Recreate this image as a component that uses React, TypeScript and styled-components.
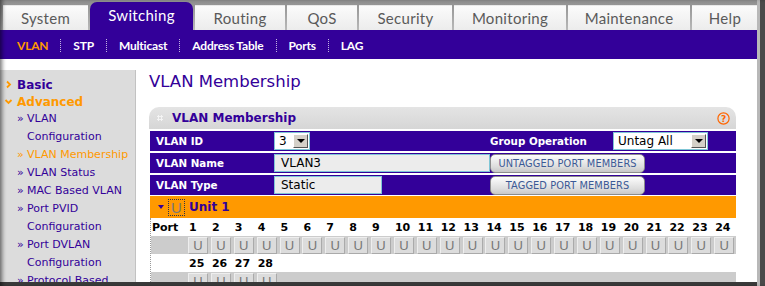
import styled, { createGlobalStyle, css } from "styled-components";

const GlobalStyle = createGlobalStyle`
  html, body {
    margin: 0;
    padding: 0;
    background: #fff;
  }
`;

const PURPLE = "#330099";
const ORANGE = "#ff9900";

const Frame = styled.div`
  position: relative;
  width: 765px;
  height: 286px;
  overflow: hidden;
  display: flex;
  flex-direction: column;
  background: #fff;
  font-family: "DejaVu Sans", Verdana, sans-serif;

  &::after {
    content: "";
    position: absolute;
    inset: 0;
    pointer-events: none;
    box-shadow:
      inset 4px 0 4px -2px rgba(0, 0, 0, 0.55),
      inset -5px 0 0 0 #4a4a4a,
      inset -8px 0 0 0 #b8b8b8,
      inset 0 -4px 0 0 #3a3a3a;
  }
`;

const TabBar = styled.div`
  height: 30px;
  display: flex;
  align-items: flex-end;
  gap: 2px;
  padding-left: 3px;
  background: linear-gradient(#8e8e8e, #b9b9b9);
  flex-shrink: 0;
`;

const Tab = styled.div<{ $w: number; $active?: boolean }>`
  width: ${(p) => p.$w}px;
  height: 25px;
  display: flex;
  align-items: center;
  justify-content: center;
  font-family: Lato, "Open Sans", sans-serif;
  font-size: 15px;
  letter-spacing: 0.3px;
  color: #5a5a5a;
  background: linear-gradient(#fbfbfb, #ececec);
  border-top: 1px solid #e8e8e8;
  box-sizing: border-box;

  ${(p) =>
    p.$active &&
    css`
      height: 28px;
      color: #fff;
      background: ${PURPLE};
      border-top: none;
      border-radius: 7px 7px 0 0;
      padding-bottom: 3px;
    `}
`;

const SubNav = styled.div`
  height: 29px;
  display: flex;
  align-items: center;
  padding-left: 17px;
  background: ${PURPLE};
  flex-shrink: 0;
`;

const SubItem = styled.span<{ $active?: boolean }>`
  font-family: Lato, "Open Sans", sans-serif;
  font-weight: 700;
  font-size: 12px;
  letter-spacing: -0.2px;
  color: ${(p) => (p.$active ? ORANGE : "#fff")};
`;

const SubSep = styled.span`
  display: inline-block;
  height: 13px;
  margin: 0 12px -2px;
  border-left: 1px dotted rgba(255, 255, 255, 0.7);
`;

const Body = styled.div`
  flex: 1;
  display: flex;
  min-height: 0;
`;

const Sidebar = styled.div`
  width: 136px;
  margin-top: 11px;
  padding-top: 6px;
  background: #dcdcdc;
  border-right: 1px solid #c2c2c2;
  box-sizing: border-box;
  flex-shrink: 0;
`;

const SideHead = styled.div<{ $open?: boolean }>`
  display: flex;
  align-items: center;
  height: 17px;
  padding-left: 4px;
  font-size: 12px;
  font-weight: 700;
  color: ${(p) => (p.$open ? ORANGE : PURPLE)};

  svg {
    width: 9px;
    margin-right: 4px;
  }
`;

const SideLink = styled.div<{ $active?: boolean }>`
  display: flex;
  padding: 0 0 0 17px;
  font-size: 11px;
  line-height: 18px;
  color: ${(p) => (p.$active ? ORANGE : PURPLE)};

  &::before {
    content: "»";
    width: 10px;
    flex-shrink: 0;
  }

  span {
    max-width: 105px;
  }
`;

const Main = styled.div`
  flex: 1;
  padding: 13px 29px 0 13px;
  min-width: 0;
`;

const Title = styled.div`
  font-size: 16.5px;
  line-height: 20px;
  color: ${PURPLE};
  margin-bottom: 15px;
`;

const Panel = styled.div`
  display: flex;
  flex-direction: column;
`;

const PanelHead = styled.div`
  height: 22px;
  display: flex;
  align-items: center;
  padding: 0 6px 0 8px;
  border-radius: 10px 10px 0 0;
  background: linear-gradient(#e4e4e4, #d6d6d6);
  font-size: 12px;
  font-weight: 700;
  color: ${PURPLE};
`;

const Grip = styled.span`
  width: 6px;
  height: 6px;
  margin-right: 9px;
  background-image: radial-gradient(circle, #f4f4f4 1px, transparent 1.2px);
  background-size: 3px 3px;
`;

const HelpIcon = styled.svg`
  margin-left: auto;
`;

const FormRow = styled.div`
  display: grid;
  grid-template-columns: 124px 216px 123px 1fr;
  align-items: center;
  height: 20px;
  margin: 2px 0 0 1px;
  background: ${PURPLE};
`;

const Label = styled.span<{ $flush?: boolean }>`
  padding-left: ${(p) => (p.$flush ? 0 : 6)}px;
  font-size: 10.3px;
  font-weight: 700;
  color: #fff;
`;

const SelectBox = styled.div<{ $w: number }>`
  width: ${(p) => p.$w}px;
  height: 18px;
  display: flex;
  align-items: center;
  justify-content: space-between;
  box-sizing: border-box;
  background: #fff;
  border: 1px solid #7fc6d6;
  padding: 0 1px 0 4px;
  font-size: 12px;
  color: #000;
`;

const Arrow = styled.span`
  width: 15px;
  height: 14px;
  box-sizing: border-box;
  display: flex;
  align-items: center;
  justify-content: center;
  background: #d4d0c8;
  border: 1px solid;
  border-color: #fff #555 #555 #fff;

  &::after {
    content: "";
    border-left: 4px solid transparent;
    border-right: 4px solid transparent;
    border-top: 4px solid #000;
  }
`;

const TextBox = styled.div<{ $w: number }>`
  width: ${(p) => p.$w}px;
  height: 18px;
  display: flex;
  align-items: center;
  box-sizing: border-box;
  padding-left: 6px;
  background: #ececec;
  border: 1px solid #7fc6d6;
  font-size: 12px;
  color: #000;
`;

const Button = styled.div`
  grid-column: 3 / span 2;
  width: 155px;
  height: 19px;
  display: flex;
  align-items: center;
  justify-content: center;
  box-sizing: border-box;
  border: 1px solid #8c8c8c;
  border-radius: 5px;
  background: linear-gradient(#fdfdfd, #dcdcdc 70%, #c8c8c8);
  font-size: 9.8px;
  letter-spacing: 0.1px;
  color: #3c5a96;
`;

const UnitRow = styled.div`
  height: 22px;
  display: flex;
  align-items: center;
  gap: 4px;
  margin: 1px 0 0 1px;
  padding-left: 8px;
  background: ${ORANGE};
  font-size: 12px;
  font-weight: 700;
  color: ${PURPLE};
`;

const Caret = styled.span`
  border-left: 3px solid transparent;
  border-right: 3px solid transparent;
  border-top: 4px solid ${PURPLE};
`;

const UnitToggle = styled.span`
  width: 17px;
  height: 17px;
  display: flex;
  align-items: center;
  justify-content: center;
  box-sizing: border-box;
  border: 1px dotted #334;
  font-family: "Liberation Sans", Arial, sans-serif;
  font-size: 15px;
  font-weight: 400;
  color: #777;
`;

const PortGrid = styled.div`
  display: grid;
  grid-template-columns: 36px repeat(24, 1fr);
  grid-auto-rows: 18px;
  margin-left: 1px;
  border-left: 1px dotted #999;
`;

const PortHead = styled.span`
  display: flex;
  align-items: center;
  padding-left: 1px;
  font-size: 11px;
  font-weight: 700;
  color: #000;
`;

const PortNum = styled.span`
  display: flex;
  align-items: center;
  padding-left: 2px;
  font-size: 11px;
  font-weight: 700;
  color: #000;
`;

const GrayCell = styled.span`
  display: flex;
  align-items: center;
  padding-left: 1px;
  background: #cccccc;
`;

const UButton = styled.span`
  width: 20px;
  height: 17px;
  display: flex;
  align-items: center;
  justify-content: center;
  box-sizing: border-box;
  background: #dcdcdc;
  border: 1px solid;
  border-color: #eee #aaa #aaa #eee;
  font-family: "Liberation Sans", Arial, sans-serif;
  font-size: 13px;
  color: #777;
`;

const tabs = [
  { label: "System", w: 85 },
  { label: "Switching", w: 103, active: true },
  { label: "Routing", w: 90 },
  { label: "QoS", w: 70 },
  { label: "Security", w: 93 },
  { label: "Monitoring", w: 112 },
  { label: "Maintenance", w: 122 },
  { label: "Help", w: 66 },
];

const subNav = ["VLAN", "STP", "Multicast", "Address Table", "Ports", "LAG"];

const links = [
  { label: "VLAN Configuration" },
  { label: "VLAN Membership", active: true },
  { label: "VLAN Status" },
  { label: "MAC Based VLAN" },
  { label: "Port PVID Configuration" },
  { label: "Port DVLAN Configuration" },
  { label: "Protocol Based VLAN" },
];

const firstPorts = Array.from({ length: 24 }, (_, i) => i + 1);
const secondPorts = [25, 26, 27, 28];

function Chevron({ down }: { down?: boolean }) {
  return (
    <svg viewBox="0 0 9 9" height="9">
      {down ? (
        <path d="M1.5 3 L4.5 6 L7.5 3" fill="none" stroke={ORANGE} strokeWidth="1.8" />
      ) : (
        <path d="M3 1.5 L6 4.5 L3 7.5" fill="none" stroke={ORANGE} strokeWidth="1.8" />
      )}
    </svg>
  );
}

export default function App() {
  return (
    <>
      <GlobalStyle />
      <Frame>
        <TabBar>
          {tabs.map((t) => (
            <Tab key={t.label} $w={t.w} $active={t.active}>
              {t.label}
            </Tab>
          ))}
        </TabBar>
        <SubNav>
          {subNav.map((s, i) => (
            <span key={s}>
              {i > 0 && <SubSep />}
              <SubItem $active={i === 0}>{s}</SubItem>
            </span>
          ))}
        </SubNav>
        <Body>
          <Sidebar>
            <SideHead>
              <Chevron />
              Basic
            </SideHead>
            <SideHead $open>
              <Chevron down />
              Advanced
            </SideHead>
            {links.map((l) => (
              <SideLink key={l.label} $active={l.active}>
                <span>{l.label}</span>
              </SideLink>
            ))}
          </Sidebar>
          <Main>
            <Title>VLAN Membership</Title>
            <Panel>
              <PanelHead>
                <Grip />
                VLAN Membership
                <HelpIcon width="13" height="13" viewBox="0 0 13 13">
                  <circle cx="6.5" cy="6.5" r="5.6" fill="none" stroke="#ff6600" strokeWidth="1.2" />
                  <text x="6.5" y="10" textAnchor="middle" fontSize="9" fontWeight="700" fill="#ff6600" fontFamily="DejaVu Sans, sans-serif">
                    ?
                  </text>
                </HelpIcon>
              </PanelHead>
              <FormRow>
                <Label>VLAN ID</Label>
                <SelectBox $w={36}>
                  3
                  <Arrow />
                </SelectBox>
                <Label $flush>Group Operation</Label>
                <SelectBox $w={95}>
                  Untag All
                  <Arrow />
                </SelectBox>
              </FormRow>
              <FormRow>
                <Label>VLAN Name</Label>
                <TextBox $w={216}>VLAN3</TextBox>
                <Button>UNTAGGED PORT MEMBERS</Button>
              </FormRow>
              <FormRow>
                <Label>VLAN Type</Label>
                <TextBox $w={108}>Static</TextBox>
                <Button>TAGGED PORT MEMBERS</Button>
              </FormRow>
              <UnitRow>
                <Caret />
                <UnitToggle>U</UnitToggle>
                Unit 1
              </UnitRow>
              <PortGrid>
                <PortHead>Port</PortHead>
                {firstPorts.map((n) => (
                  <PortNum key={n}>{n}</PortNum>
                ))}
                <GrayCell />
                {firstPorts.map((n) => (
                  <GrayCell key={n}>
                    <UButton>U</UButton>
                  </GrayCell>
                ))}
                <PortHead />
                {secondPorts.map((n) => (
                  <PortNum key={n}>{n}</PortNum>
                ))}
                {firstPorts.slice(4).map((n) => (
                  <span key={n} />
                ))}
                <GrayCell />
                {firstPorts.map((n) => (
                  <GrayCell key={n}>{n <= 4 && <UButton>U</UButton>}</GrayCell>
                ))}
              </PortGrid>
            </Panel>
          </Main>
        </Body>
      </Frame>
    </>
  );
}
